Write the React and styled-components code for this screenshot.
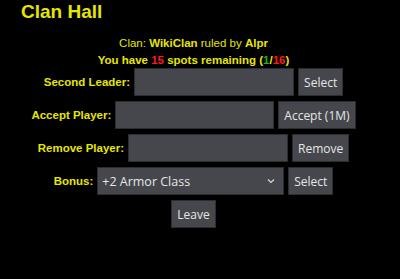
import React from 'react';
import styled, { createGlobalStyle } from 'styled-components';

const Global = createGlobalStyle`
    html, body {
        margin: 0;
        padding: 0;
        background: #000;
    }
    body {
        font-family: "Liberation Sans", Arial, sans-serif;
        color: #e6e600;
    }
`;

const Page = styled.div`
    width: 387px;
    height: 279px;
    overflow: hidden;
`;

const Title = styled.h1`
    margin: 0;
    padding: 1px 0 0 21px;
    font-size: 19px;
    line-height: 22px;
    font-weight: bold;
    color: #e6e600;
`;

const Info = styled.div`
    margin-top: 12px;
    text-align: center;
    font-size: 11.5px;
    line-height: 16.5px;
    .strong {
        font-weight: bold;
    }
`;

const Num = styled.span`
    color: ${p => p.$tone === 'green' ? '#22b022' : '#ff1a1a'};
`;

const Form = styled.div`
    margin-top: 0;
    display: flex;
    flex-direction: column;
    gap: 5px;
`;

const Row = styled.div`
    display: flex;
    justify-content: center;
    align-items: center;
    gap: 4px;
`;

const Label = styled.label`
    font-size: 11.5px;
    font-weight: bold;
    color: #e6e600;
`;

const Field = styled.input`
    box-sizing: border-box;
    width: ${p => p.$w}px;
    height: 28px;
    margin: 0;
    background: #45474c;
    border: 1px solid #2c2d30;
    color: #e0e0e0;
    outline: none;
`;

const SelectWrap = styled.div`
    position: relative;
    width: 187px;
    height: 28px;
    svg {
        position: absolute;
        right: 9px;
        top: 11px;
        pointer-events: none;
    }
`;

const Select = styled.select`
    box-sizing: border-box;
    width: 100%;
    height: 28px;
    margin: 0;
    padding: 0 0 0 4px;
    appearance: none;
    background: #45474c;
    border: 1px solid #2c2d30;
    color: #e6e6e6;
    font-family: "Open Sans", sans-serif;
    font-size: 12.5px;
    outline: none;
`;

const Button = styled.button`
    box-sizing: border-box;
    height: 28px;
    margin: 0;
    padding: 0 5px;
    background: #45474c;
    border: 1px solid #2c2d30;
    color: #e6e6e6;
    font-family: "Open Sans", sans-serif;
    font-size: 12px;
    cursor: pointer;
`;

const App = () => {
    return (
        <React.Fragment>
            <Global />
            <Page>
                <Title>Clan Hall</Title>
                <Info>
                    <div>Clan: <span className="strong">WikiClan</span> ruled by <span className="strong">Alpr</span></div>
                    <div className="strong">You have <Num>15</Num> spots remaining (<Num $tone="green">1</Num>/<Num>16</Num>)</div>
                </Info>
                <Form>
                    <Row>
                        <Label>Second Leader:</Label>
                        <Field $w={160} />
                        <Button>Select</Button>
                    </Row>
                    <Row>
                        <Label>Accept Player:</Label>
                        <Field $w={159} />
                        <Button>Accept (1M)</Button>
                    </Row>
                    <Row>
                        <Label>Remove Player:</Label>
                        <Field $w={160} />
                        <Button>Remove</Button>
                    </Row>
                    <Row>
                        <Label>Bonus:</Label>
                        <SelectWrap>
                            <Select defaultValue="ac2">
                                <option value="ac2">+2 Armor Class</option>
                            </Select>
                            <svg width="8" height="6" viewBox="0 0 8 6">
                                <path d="M1 1.5 L4 4.5 L7 1.5" fill="none" stroke="#d8d8d8" strokeWidth="1.2" />
                            </svg>
                        </SelectWrap>
                        <Button>Select</Button>
                    </Row>
                    <Row>
                        <Button>Leave</Button>
                    </Row>
                </Form>
            </Page>
        </React.Fragment>
    );
};

export default App;
